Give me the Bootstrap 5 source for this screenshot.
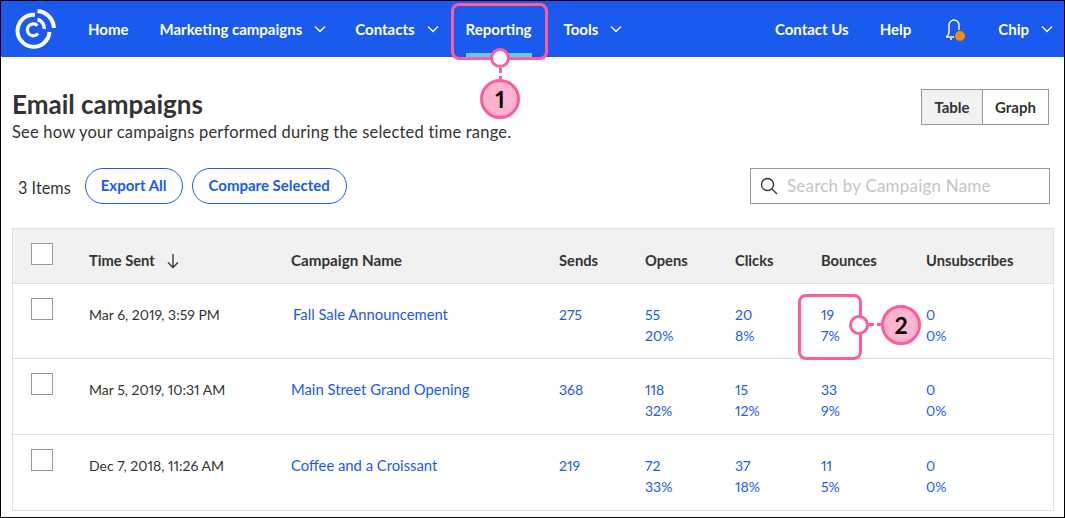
<!DOCTYPE html>
<html lang="en"><head><meta charset="utf-8"><title>Email campaigns</title>
<link href="https://cdn.jsdelivr.net/npm/bootstrap@5.3.0/dist/css/bootstrap.min.css" rel="stylesheet">
<style>
html,body{height:100%}
body{font-family:Lato,"Open Sans",sans-serif;font-size:14.5px;color:#333;overflow:hidden;background:#fff;font-variant-numeric:proportional-nums}
.frame{position:relative;height:518px;border:1px solid #000;overflow:hidden}
.topbar{height:56px;background:#1a5aef;padding-left:14px}
.logo-box{width:42px;margin-right:31px}
.toplink{color:#fff;font-weight:700;font-size:15px;text-decoration:none;display:flex;align-items:center;height:56px;position:relative}
.toplink svg{margin-left:12px}
.active-bar{position:absolute;left:0;right:0;bottom:0;height:4px;background:#5fcdf5}
.heading{font-size:26px;font-weight:700;line-height:30px;margin:0;color:#333}
.sub{font-size:16.5px;letter-spacing:.2px;line-height:20px;margin:3px 0 0}
.headrow{padding:32px 15px 0 11px}
.toggle .tgbtn{border:1px solid #999;border-radius:0;font-size:15px;font-weight:700;color:#333;background:#fff;padding:0;height:36px;width:67px}
.toggle .tgbtn.on{background:#f1f1f1;width:62px}
.actions{padding:26px 14px 0 17px;height:86px}
.pillbtn{border:1px solid #1a5aef;color:#1a5aef;border-radius:18px;font-size:15px;font-weight:700;background:#fff;height:36px}
.pill-a{padding:0 15px 2px;margin-right:9px}
.pill-b{padding:0 16px 2px}
.searchbox{width:300px;height:36px;border:1px solid #999;padding-left:9px}
.searchbox input{border:0;outline:0;flex:1;font-size:17px;letter-spacing:.2px;padding:0 0 0 9px;min-width:0;background:transparent}
.searchbox input::placeholder{color:#c4c4c4}
.datawrap{margin:0 10px 0 11px;border:1px solid #e0e0e0}
.datatable{table-layout:fixed;margin:0;width:100%;--bs-table-bg:transparent}
.datatable th{background:#f1f1f1;font-weight:700;font-size:14.7px;height:54px;padding:20px 0 0;vertical-align:top;line-height:22px;border-bottom:1px solid #ddd;color:#333}
.datatable th.namehead{font-size:15.2px}
.datatable td{padding:20px 0 0;vertical-align:top;line-height:21px;font-size:14px;border-bottom:1px solid #ddd;color:#333}
.datatable td.namecell{font-size:14.8px}
.datatable tbody tr{height:75.5px}
.datatable tbody tr:last-child td{border-bottom:0}
.datatable a{color:#1a5aef;text-decoration:none}
.fall-link{margin-left:2px}
.tick{display:block;width:22px;height:22px;border:1px solid #999;background:#fff;margin-left:18px;margin-top:-6px}
.callbox{position:absolute;border:3px solid #ff5c9d;border-radius:8px}
.dotring{position:absolute;width:20px;height:20px;border:3px solid #ff5c9d;border-radius:50%;background:#fff}
.numring{position:absolute;width:40px;height:40px;border:3px solid #ff5c9d;border-radius:50%;background:#ffb3d1;color:#000;font-weight:700;font-size:23px;display:flex;align-items:center;justify-content:center}
.dash{position:absolute;background:#ff5c9d}
.tl2{margin-left:31px}.tl3{margin-left:29px}.tl4{margin-left:27px}.tl5{margin-left:32px}.tl7{margin-left:31px}.tl8{margin-left:33px}.tl9{margin-left:32px;margin-right:11px}
.itemscount{line-height:36px;font-size:16.3px;margin:2px 14px 0 0}
.sortarrow{vertical-align:-3px;margin-left:11px}
</style></head><body>
<div class="frame">
<nav class="topbar d-flex align-items-center">
<div class="logo-box d-flex"><svg width="42" height="42" viewBox="15 8 42 42" fill="none" stroke="#fff"><path stroke-width="4" d="M35 14.800A16 16 0 1 0 49.500 32"/><path stroke-width="4" d="M37.500 11A18 18 0 0 1 54 28"/><path stroke-width="3.200" d="M37.500 25.500A6 6 0 1 0 38 33.500"/><path stroke-width="3.500" d="M37.500 19.500A9 9 0 0 1 44.300 29"/></svg></div>
<div class="d-flex flex-grow-1 align-items-center">
<a class="toplink" href="#">Home</a>
<a class="toplink tl2" href="#">Marketing campaigns<svg width="12" height="8" viewBox="0 0 12 8" fill="none" stroke="#fff" stroke-width="1.4"><path d="M1 1.500l5 5 5-5"/></svg></a>
<a class="toplink tl3" href="#">Contacts<svg width="12" height="8" viewBox="0 0 12 8" fill="none" stroke="#fff" stroke-width="1.4"><path d="M1 1.500l5 5 5-5"/></svg></a>
<a class="toplink tl4" href="#">Reporting<span class="active-bar"></span></a>
<a class="toplink tl5" href="#">Tools<svg width="12" height="8" viewBox="0 0 12 8" fill="none" stroke="#fff" stroke-width="1.4"><path d="M1 1.500l5 5 5-5"/></svg></a>
<a class="toplink ms-auto" href="#">Contact Us</a>
<a class="toplink tl7" href="#">Help</a>
<a class="toplink tl8" href="#" aria-label="Notifications"><svg class="m-0" width="22" height="24" viewBox="0 0 22 24" fill="none" stroke="#fff" stroke-width="1.400"><path d="M2 20c2-1 3-3 3-6V8a5 5 0 0 1 10 0v5"/><path d="M2 20h8M6 22h2"/><circle cx="16" cy="19" r="5" fill="#ff8c00" stroke="none"/></svg></a>
<a class="toplink tl9" href="#">Chip<svg width="12" height="8" viewBox="0 0 12 8" fill="none" stroke="#fff" stroke-width="1.4"><path d="M1 1.500l5 5 5-5"/></svg></a>
</div>
</nav>
<div class="headrow d-flex justify-content-between">
<div><h1 class="heading">Email campaigns</h1><p class="sub">See how your campaigns performed during the selected time range.</p></div>
<div class="toggle btn-group align-self-start" role="group"><button class="btn tgbtn on" type="button">Table</button><button class="btn tgbtn" type="button">Graph</button></div>
</div>
<div class="actions d-flex align-items-start">
<span class="itemscount">3 Items</span>
<button class="btn pillbtn pill-a" type="button">Export All</button>
<button class="btn pillbtn pill-b" type="button">Compare Selected</button>
<div class="searchbox ms-auto d-flex align-items-center"><svg width="18" height="18" viewBox="0 0 18 18" fill="none" stroke="#333" stroke-width="1.3"><circle cx="7.500" cy="7.500" r="6"/><path d="M12 12l5 5"/></svg><input type="text" placeholder="Search by Campaign Name"></div>
</div>
<div class="datawrap">
<table class="table datatable">
<colgroup><col style="width:76px"><col style="width:202px"><col style="width:268px"><col style="width:86px"><col style="width:90px"><col style="width:86px"><col style="width:105px"><col></colgroup>
<thead><tr><th><span class="tick"></span></th><th>Time Sent<svg width="14" height="16" viewBox="0 0 14 16" fill="none" stroke="#333" stroke-width="1.3" class="sortarrow"><path d="M7 1v13M2 9.500l5 5 5-5"/></svg></th><th class="namehead">Campaign Name</th><th>Sends</th><th>Opens</th><th>Clicks</th><th>Bounces</th><th>Unsubscribes</th></tr></thead>
<tbody>
<tr><td><span class="tick"></span></td><td>Mar 6, 2019, 3:59 PM</td><td class="namecell"><a href="#" class="fall-link">Fall Sale Announcement</a></td><td><a href="#">275</a></td><td><a href="#">55<br>20%</a></td><td><a href="#">20<br>8%</a></td><td><a href="#">19<br>7%</a></td><td><a href="#">0<br>0%</a></td></tr>
<tr><td><span class="tick"></span></td><td>Mar 5, 2019, 10:31 AM</td><td class="namecell"><a href="#">Main Street Grand Opening</a></td><td><a href="#">368</a></td><td><a href="#">118<br>32%</a></td><td><a href="#">15<br>12%</a></td><td><a href="#">33<br>9%</a></td><td><a href="#">0<br>0%</a></td></tr>
<tr><td><span class="tick"></span></td><td>Dec 7, 2018, 11:26 AM</td><td class="namecell"><a href="#">Coffee and a Croissant</a></td><td><a href="#">219</a></td><td><a href="#">72<br>33%</a></td><td><a href="#">37<br>18%</a></td><td><a href="#">11<br>5%</a></td><td><a href="#">0<br>0%</a></td></tr>
</tbody></table>
</div>
<div class="callbox" style="left:450px;top:2px;width:97px;height:57px"></div>
<div class="dotring" style="left:489px;top:47px"></div>
<div class="dash" style="left:498px;top:67px;width:3px;height:5px"></div>
<div class="dash" style="left:498px;top:75px;width:3px;height:4px"></div>
<div class="numring" style="left:479px;top:78px">1</div>
<div class="callbox" style="left:797px;top:293px;width:64px;height:66px"></div>
<div class="dotring" style="left:848px;top:314px"></div>
<div class="dash" style="left:868px;top:322px;width:5px;height:3px"></div>
<div class="dash" style="left:876px;top:322px;width:5px;height:3px"></div>
<div class="numring" style="left:880px;top:304px">2</div>
</div>
<script src="https://cdn.jsdelivr.net/npm/bootstrap@5.3.0/dist/js/bootstrap.bundle.min.js"></script>
</body></html>
